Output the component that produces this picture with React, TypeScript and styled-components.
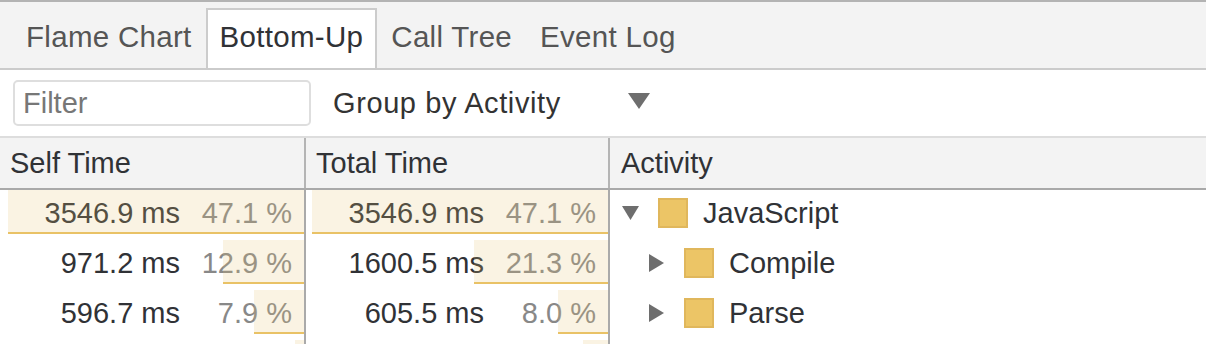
import React from "react";
import styled, { createGlobalStyle } from "styled-components";

const GlobalStyle = createGlobalStyle`
  html, body {
    margin: 0;
    padding: 0;
    background: #ffffff;
  }
  body {
    font-family: "Liberation Sans", Arial, Helvetica, sans-serif;
    font-size: 29px;
    color: #303236;
  }
  * {
    box-sizing: border-box;
  }
`;

type Row = {
  name: string;
  depth: number;
  expanded: boolean;
  selfMs: string;
  selfPct: number;
  totalMs: string;
  totalPct: number;
};

const rows: Row[] = [
  { name: "JavaScript", depth: 0, expanded: true, selfMs: "3546.9 ms", selfPct: 47.1, totalMs: "3546.9 ms", totalPct: 47.1 },
  { name: "Compile", depth: 1, expanded: false, selfMs: "971.2 ms", selfPct: 12.9, totalMs: "1600.5 ms", totalPct: 21.3 },
  { name: "Parse", depth: 1, expanded: false, selfMs: "596.7 ms", selfPct: 7.9, totalMs: "605.5 ms", totalPct: 8.0 },
];

// the next row only peeks in at the bottom edge, its bars are all that shows
const nextRow = { selfPct: 1.4, totalPct: 4.0 };

const MAX_PCT = 47.1;
const BAR_MAX = 296;

const barWidth = (pct: number) => (pct / MAX_PCT) * BAR_MAX;

const tabs = ["Flame Chart", "Bottom-Up", "Call Tree", "Event Log"];

const App: React.FC = () => {
  return (
    <Page>
      <GlobalStyle />
      <TabStrip>
        {tabs.map((t) => (
          <Tab key={t} $active={t === "Bottom-Up"}>
            {t}
          </Tab>
        ))}
      </TabStrip>

      <Toolbar>
        <FilterInput placeholder="Filter" />
        <GroupSelect>
          <span>Group by Activity</span>
          <svg width="22" height="16" viewBox="0 0 22 16">
            <polygon points="0,0 22,0 11,16" fill="#6e6e6e" />
          </svg>
        </GroupSelect>
      </Toolbar>

      <Grid>
        <HeaderCell $col={1}>Self Time</HeaderCell>
        <HeaderCell $col={2}>Total Time</HeaderCell>
        <HeaderCell $col={3}>Activity</HeaderCell>

        {rows.map((r) => (
          <React.Fragment key={r.name}>
            <TimeCell>
              <Ms>{r.selfMs}</Ms>
              <Pct>{r.selfPct.toFixed(1)} %</Pct>
              <Bar style={{ width: barWidth(r.selfPct) }} />
            </TimeCell>
            <TimeCell>
              <Ms>{r.totalMs}</Ms>
              <Pct>{r.totalPct.toFixed(1)} %</Pct>
              <Bar style={{ width: barWidth(r.totalPct) }} />
            </TimeCell>
            <ActivityCell $depth={r.depth}>
              <Toggle>
                {r.expanded ? (
                  <svg width="17" height="14" viewBox="0 0 17 14">
                    <polygon points="0,0 17,0 8.5,14" fill="#6e6e6e" />
                  </svg>
                ) : (
                  <svg width="15" height="18" viewBox="0 0 15 18">
                    <polygon points="0,0 15,9 0,18" fill="#6e6e6e" />
                  </svg>
                )}
              </Toggle>
              <Swatch />
              <Name>{r.name}</Name>
            </ActivityCell>
          </React.Fragment>
        ))}

        <TimeCell>
          <Bar style={{ width: barWidth(nextRow.selfPct) }} />
        </TimeCell>
        <TimeCell>
          <Bar style={{ width: barWidth(nextRow.totalPct) }} />
        </TimeCell>
        <ActivityCell $depth={1} />
      </Grid>
    </Page>
  );
};

export default App;

const Page = styled.div`
  width: 1206px;
  height: 344px;
  overflow: hidden;
  background: #ffffff;
`;

const TabStrip = styled.div`
  display: flex;
  align-items: flex-end;
  height: 70px;
  padding-left: 12px;
  background: #f3f3f3;
  border-top: 2px solid #b3b3b3;
  border-bottom: 2px solid #cbcbcb;
`;

const Tab = styled.div<{ $active?: boolean }>`
  display: flex;
  align-items: center;
  height: 60px;
  padding: 0 12px 4px;
  border: 2px solid ${(p) => (p.$active ? "#cccccc" : "transparent")};
  border-bottom: none;
  background: ${(p) => (p.$active ? "#ffffff" : "transparent")};
  color: ${(p) => (p.$active ? "#303236" : "#555555")};
  font-size: 29.5px;
  letter-spacing: 0.3px;
  white-space: nowrap;
`;

const Toolbar = styled.div`
  display: flex;
  align-items: center;
  height: 68px;
  padding-left: 13px;
  border-bottom: 2px solid #dddddd;
`;

const FilterInput = styled.input`
  width: 298px;
  height: 46px;
  padding: 0 8px;
  border: 2px solid #dedede;
  border-radius: 5px;
  font-family: inherit;
  font-size: 29px;
  color: #303236;
  outline: none;

  &::placeholder {
    color: #777777;
  }
`;

const GroupSelect = styled.div`
  display: flex;
  align-items: center;
  justify-content: space-between;
  width: 317px;
  margin-left: 22px;
  color: #333333;
  letter-spacing: 0.6px;

  svg {
    margin-top: -4px;
  }
`;

const Grid = styled.div`
  display: grid;
  grid-template-columns: 306px 304px 1fr;
  grid-auto-rows: 50px;
`;

const HeaderCell = styled.div<{ $col: number }>`
  display: flex;
  align-items: center;
  height: 52px;
  padding-left: ${(p) => (p.$col === 3 ? 11 : 10)}px;
  background: #f3f3f3;
  border-bottom: 2px solid #a9a9a9;
  border-right: ${(p) => (p.$col === 3 ? "none" : "2px solid #b4b4b4")};
  color: #303236;
`;

const TimeCell = styled.div`
  position: relative;
  display: flex;
  align-items: center;
  justify-content: flex-end;
  padding-right: 12px;
  border-right: 2px solid #aaaaaa;
  white-space: nowrap;
`;

const Ms = styled.span`
  color: #303236;
`;

const Pct = styled.span`
  width: 112px;
  text-align: right;
  color: #888888;
`;

const Bar = styled.div`
  position: absolute;
  top: 2px;
  right: 0;
  height: 44px;
  background: rgba(230, 195, 115, 0.2);
  border-bottom: 2px solid #e9c266;
`;

const ActivityCell = styled.div<{ $depth: number }>`
  display: flex;
  align-items: center;
  padding-left: ${(p) => 11 + p.$depth * 26}px;
  white-space: nowrap;
`;

const Toggle = styled.div`
  display: flex;
  align-items: center;
  justify-content: center;
  width: 18px;
  height: 20px;
`;

const Swatch = styled.div`
  width: 30px;
  height: 30px;
  margin-left: 19px;
  background: #ecc566;
  border: 2px solid #e0b75c;
`;

const Name = styled.span`
  margin-left: 15px;
  color: #303236;
`;
